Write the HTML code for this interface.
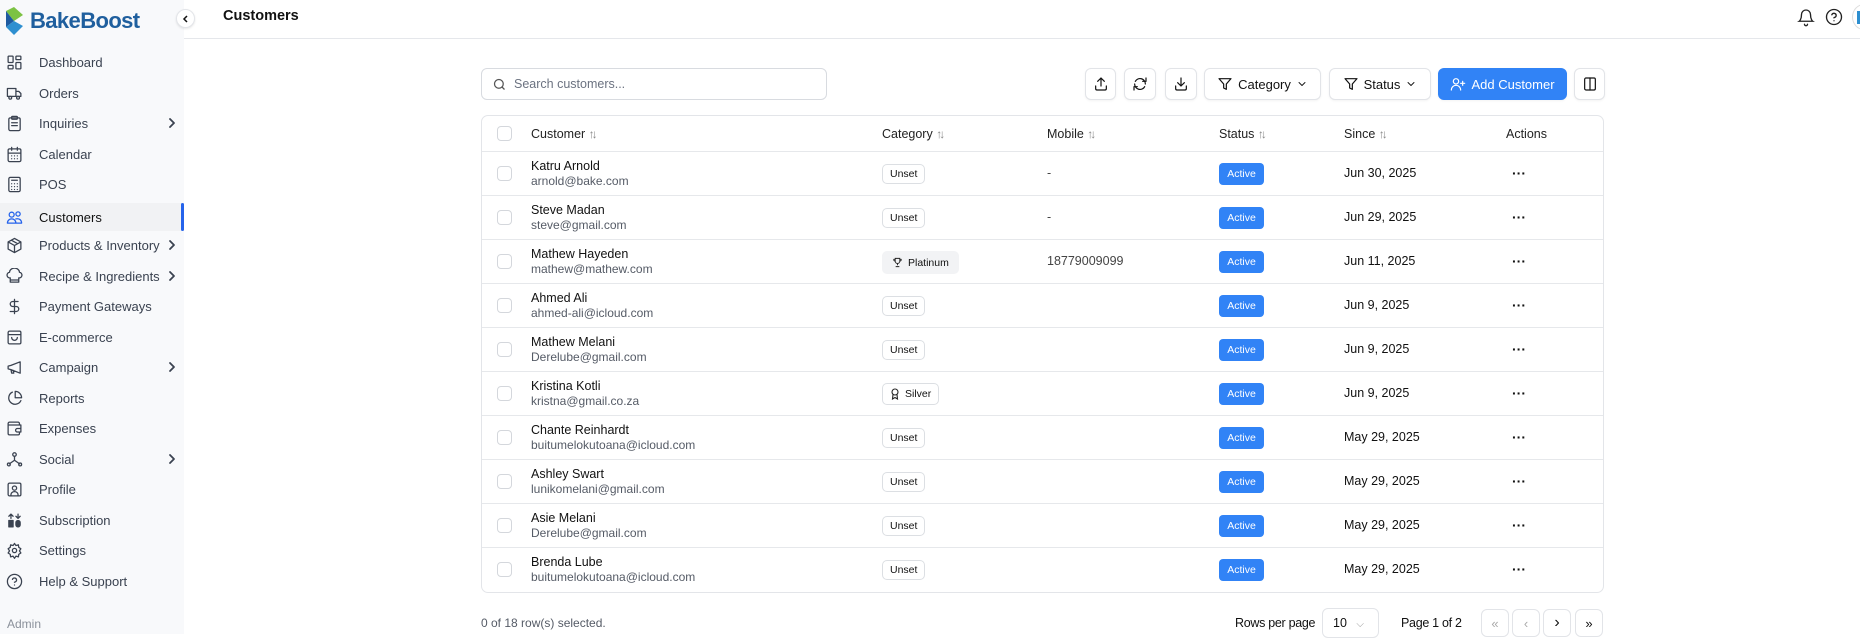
<!DOCTYPE html>
<html><head><meta charset="utf-8"><style>
*{box-sizing:border-box;margin:0;padding:0}
body{width:1860px;height:634px;overflow:hidden;font-family:"Liberation Sans",sans-serif;background:#fff;color:#111;position:relative}
.sb{position:absolute;left:0;top:0;width:184px;height:634px;background:#f8f9fb}
.nav{position:absolute;left:0;width:184px;height:30px;display:flex;align-items:center;font-size:13px;color:#3a4250}
.nav svg{position:absolute;left:6px;width:17px;height:17px;fill:none;stroke:#3a4250;stroke-width:1.8;stroke-linecap:round;stroke-linejoin:round}
.nav span{position:absolute;left:39px}
.nav .chev{position:absolute;left:166px;width:12px;height:12px}
.nav.act{background:#f1f2f4;color:#111;height:28px}
.nav.act:after{content:"";position:absolute;right:0;top:0;width:3px;height:28px;background:#2563eb;border-radius:2px}
.btn{position:absolute;top:68px;height:32px;border:1px solid #e2e4e8;border-radius:6px;background:#fff;display:flex;align-items:center;justify-content:center;font-size:13px;gap:5px;box-shadow:0 1px 2px rgba(0,0,0,.05)}
.btn svg{width:16px;height:16px;fill:none;stroke:#111;stroke-width:1.8;stroke-linecap:round;stroke-linejoin:round}
.tbl{position:absolute;left:481px;top:115px;width:1123px;height:478px;border:1px solid #e3e5e9;border-radius:7px;overflow:hidden}
.row{position:absolute;left:0;width:1121px;height:44px;border-bottom:1px solid #e6e8eb;font-size:13px}
.row>*{position:absolute}
.cb{left:15px;width:15px;height:15px;border:1px solid #d4d7dc;border-radius:4px;top:14px}
.nm{left:49px;top:7px;font-size:12.5px;color:#111;line-height:15px}
.em{left:49px;top:22px;font-size:12px;color:#555b66;line-height:15px}
.bd{left:400px;top:12px;height:20px;border:1px solid #dcdfe3;border-radius:5px;font-size:10.5px;padding:0 7px;display:flex;align-items:center;gap:5px}
.mob{left:565px;top:14px;color:#444;font-size:12.5px}
.st{left:737px;top:11px;width:45px;height:22px;background:#3183f6;border-radius:4px;color:#fff;font-size:10.5px;display:flex;align-items:center;justify-content:center}
.dt{left:862px;top:14px;font-size:12.5px}
.dots{left:1030px;top:13px;font-size:14px;font-weight:bold}
.hd{top:0;height:36px;font-size:12.5px;color:#222}
.hd>div{position:absolute;top:11px}
.ar{color:#888;font-size:12px;letter-spacing:-3px}
.pg{position:absolute;top:609px;width:28px;height:28px;border:1px solid #e2e4e8;border-radius:6px;display:flex;align-items:center;justify-content:center;font-size:13px}
</style></head><body>
<div class="sb">
 <svg style="position:absolute;left:5px;top:7px" width="20" height="28" viewBox="0 0 20 28"><path d="M1 4 L9 0 L18 8 L9 14Z" fill="#7cc243"/><path d="M1 4 L9 14 L1 20Z" fill="#1e5aa0"/><path d="M9 14 L18 19 L9 28 L1 20Z" fill="#2e8fd0"/></svg>
 <div style="position:absolute;left:30px;top:8px;font-size:22px;font-weight:bold;color:#1f5f9e;letter-spacing:-0.6px">BakeBoost</div>
</div>
<div style="position:absolute;left:176px;top:9px;width:19px;height:19px;border-radius:50%;background:#fff;border:1px solid #e3e5e9;box-shadow:0 1px 2px rgba(0,0,0,.1);display:flex;align-items:center;justify-content:center"><svg width="10" height="10" viewBox="0 0 10 10"><path d="M6 2 L3 5 L6 8" stroke="#111" stroke-width="1.5" fill="none"/></svg></div>

<div class="nav" style="top:47px"><svg viewBox="0 0 24 24"><rect x="3" y="3" width="7" height="9" rx="1"/><rect x="14" y="3" width="7" height="5" rx="1"/><rect x="14" y="12" width="7" height="9" rx="1"/><rect x="3" y="16" width="7" height="5" rx="1"/></svg><span>Dashboard</span></div>
<div class="nav" style="top:78px"><svg viewBox="0 0 24 24"><path d="M2 5h12v11H2z M14 9h4l3 3v4h-7"/><circle cx="6" cy="18" r="2"/><circle cx="17" cy="18" r="2"/></svg><span>Orders</span></div>
<div class="nav" style="top:108px"><svg viewBox="0 0 24 24"><rect x="4" y="4" width="16" height="18" rx="2"/><rect x="8" y="2" width="8" height="4" rx="1"/><path d="M8 11h8M8 15h8"/></svg><span>Inquiries</span><svg class="chev" viewBox="0 0 12 12"><path d="M4 2l4 4-4 4"/></svg></div>
<div class="nav" style="top:139px"><svg viewBox="0 0 24 24"><rect x="3" y="4" width="18" height="18" rx="2"/><path d="M3 10h18M8 2v4M16 2v4M8 14h.01M12 14h.01M16 14h.01M8 18h.01M12 18h.01M16 18h.01"/></svg><span>Calendar</span></div>
<div class="nav" style="top:169px"><svg viewBox="0 0 24 24"><rect x="4" y="2" width="16" height="20" rx="2"/><path d="M8 6h8M8 11h.01M12 11h.01M16 11h.01M8 15h.01M12 15h.01M16 15h.01M8 19h.01M12 19h.01M16 19h.01"/></svg><span>POS</span></div>
<div class="nav act" style="top:203px"><svg viewBox="0 0 24 24" style="stroke:#2563eb"><circle cx="8" cy="8" r="3.5"/><circle cx="17" cy="7" r="3"/><path d="M2 20c0-4 3-6 6-6s6 2 6 6z M14 14c4-1 8 1 8 6h-7"/></svg><span>Customers</span></div>
<div class="nav" style="top:230px"><svg viewBox="0 0 24 24"><path d="M12 2l9 5v10l-9 5-9-5V7z M3 7l9 5 9-5 M12 12v10 M7.5 4.5l9 5"/></svg><span>Products &amp; Inventory</span><svg class="chev" viewBox="0 0 12 12"><path d="M4 2l4 4-4 4"/></svg></div>
<div class="nav" style="top:261px"><svg viewBox="0 0 24 24"><path d="M6 14a4 4 0 0 1-1-8 6 5 0 0 1 14 0 4 4 0 0 1-1 8v6H6z M6 17h12"/></svg><span>Recipe &amp; Ingredients</span><svg class="chev" viewBox="0 0 12 12"><path d="M4 2l4 4-4 4"/></svg></div>
<div class="nav" style="top:291px"><svg viewBox="0 0 24 24"><path d="M12 2v20M17 5H9.5a3.5 3.5 0 0 0 0 7h5a3.5 3.5 0 0 1 0 7H6"/></svg><span>Payment Gateways</span></div>
<div class="nav" style="top:322px"><svg viewBox="0 0 24 24"><rect x="3" y="3" width="18" height="18" rx="2"/><path d="M3 8h18M8 12a4 4 0 0 0 8 0"/></svg><span>E-commerce</span></div>
<div class="nav" style="top:352px"><svg viewBox="0 0 24 24"><path d="M3 10v4l4 1 13 5V4L7 9zM7 15l1 5h3l-1-4"/></svg><span>Campaign</span><svg class="chev" viewBox="0 0 12 12"><path d="M4 2l4 4-4 4"/></svg></div>
<div class="nav" style="top:383px"><svg viewBox="0 0 24 24"><path d="M21 15A9 9 0 1 1 9 3 M13 2a9 9 0 0 1 9 9h-9z"/></svg><span>Reports</span></div>
<div class="nav" style="top:413px"><svg viewBox="0 0 24 24"><path d="M19 7V5a2 2 0 0 0-2-2H5a2 2 0 0 0-2 2v14a2 2 0 0 0 2 2h12a2 2 0 0 0 2-2v-2 M3 7h18v10h-5a2.5 2.5 0 0 1 0-5h5"/></svg><span>Expenses</span></div>
<div class="nav" style="top:444px"><svg viewBox="0 0 24 24"><circle cx="12" cy="5" r="2.5"/><circle cx="4" cy="19" r="2"/><circle cx="20" cy="19" r="2"/><path d="M12 8v5l-7 5M12 13l7 5"/></svg><span>Social</span><svg class="chev" viewBox="0 0 12 12"><path d="M4 2l4 4-4 4"/></svg></div>
<div class="nav" style="top:474px"><svg viewBox="0 0 24 24"><rect x="3" y="3" width="18" height="18" rx="2"/><circle cx="12" cy="10" r="3"/><path d="M7 21v-2a5 4 0 0 1 10 0v2"/></svg><span>Profile</span></div>
<div class="nav" style="top:505px"><svg viewBox="0 0 24 24"><path d="M7 3v6M4 6l3-3 3 3M17 3v6M14 6l3 3 3-3"/><rect x="4" y="12" width="6" height="9" fill="#3a4250"/><rect x="14" y="12" width="6" height="9" rx="3" fill="#3a4250"/></svg><span>Subscription</span></div>
<div class="nav" style="top:535px"><svg viewBox="0 0 24 24"><circle cx="12" cy="12" r="3"/><path d="M12 2l2 3 3.5-1 .5 3.5 3 2-2 3 2 3-3 2-.5 3.5-3.5-1-2 3-2-3-3.5 1-.5-3.5-3-2 2-3-2-3 3-2 .5-3.5 3.5 1z"/></svg><span>Settings</span></div>
<div class="nav" style="top:566px"><svg viewBox="0 0 24 24"><circle cx="12" cy="12" r="10"/><path d="M9.1 9a3 3 0 0 1 5.8 1c0 2-3 3-3 3M12 17h.01"/></svg><span>Help &amp; Support</span></div>
<div style="position:absolute;left:7px;top:617px;font-size:12px;color:#8a909a">Admin</div>

<div style="position:absolute;left:184px;top:38px;width:1676px;height:1px;background:#e5e7eb"></div>
<div style="position:absolute;left:223px;top:8px;font-size:14.5px;font-weight:bold">Customers</div>
<svg style="position:absolute;left:1797px;top:8px" width="18" height="19" viewBox="0 0 24 24" fill="none" stroke="#222" stroke-width="1.8" stroke-linecap="round"><path d="M6 8a6 6 0 0 1 12 0c0 7 3 9 3 9H3s3-2 3-9M10 21a2 2 0 0 0 4 0"/></svg>
<svg style="position:absolute;left:1825px;top:8px" width="18" height="18" viewBox="0 0 24 24" fill="none" stroke="#222" stroke-width="1.8" stroke-linecap="round"><circle cx="12" cy="12" r="10"/><path d="M9.1 9a3 3 0 0 1 5.8 1c0 2-3 3-3 3M12 17h.01"/></svg>
<div style="position:absolute;left:1852px;top:4px;width:24px;height:26px;border-radius:50%;border:1px solid #ddd;background:#fff;overflow:hidden"><div style="position:absolute;left:4px;top:6px;width:6px;height:13px;background:#2e8fd0"></div></div>

<div style="position:absolute;left:481px;top:68px;width:346px;height:32px;border:1px solid #d8dbe0;border-radius:6px;display:flex;align-items:center;font-size:12.5px;color:#6b7280"><svg style="margin:0 7px 0 10px" width="15" height="15" viewBox="0 0 24 24" fill="none" stroke="#555" stroke-width="2"><circle cx="11" cy="11" r="7"/><path d="M20 20l-4-4"/></svg>Search customers...</div>
<div class="btn" style="left:1085px;width:31px"><svg viewBox="0 0 24 24"><path d="M12 3v12M7 8l5-5 5 5M4 15v4a2 2 0 0 0 2 2h12a2 2 0 0 0 2-2v-4"/></svg></div>
<div class="btn" style="left:1124px;width:32px"><svg viewBox="0 0 24 24"><path d="M21 3v5h-5M3 21v-5h5M20 12a8 8 0 0 0-15-4M4 12a8 8 0 0 0 15 4"/></svg></div>
<div class="btn" style="left:1165px;width:32px"><svg viewBox="0 0 24 24"><path d="M12 3v12M7 10l5 5 5-5M4 15v4a2 2 0 0 0 2 2h12a2 2 0 0 0 2-2v-4"/></svg></div>
<div class="btn" style="left:1204px;width:117px"><svg viewBox="0 0 24 24"><path d="M3 4h18l-7 8v8l-4-2v-6z"/></svg>Category<svg viewBox="0 0 24 24" style="width:12px"><path d="M6 9l6 6 6-6"/></svg></div>
<div class="btn" style="left:1329px;width:102px"><svg viewBox="0 0 24 24"><path d="M3 4h18l-7 8v8l-4-2v-6z"/></svg>Status<svg viewBox="0 0 24 24" style="width:12px"><path d="M6 9l6 6 6-6"/></svg></div>
<div class="btn" style="left:1438px;width:129px;background:#3183f6;border-color:#3183f6;color:#fff"><svg viewBox="0 0 24 24" style="stroke:#fff"><circle cx="9" cy="8" r="4"/><path d="M2 21a7 7 0 0 1 14 0M19 8v6M16 11h6"/></svg>Add Customer</div>
<div class="btn" style="left:1574px;width:31px"><svg viewBox="0 0 24 24"><rect x="4" y="3" width="16" height="18" rx="2"/><path d="M12 3v18"/></svg></div>

<div class="tbl">
 <div class="row hd"><div class="cb" style="top:10px"></div>
  <div style="left:49px">Customer <span class="ar">↑↓</span></div>
  <div style="left:400px">Category <span class="ar">↑↓</span></div>
  <div style="left:565px">Mobile <span class="ar">↑↓</span></div>
  <div style="left:737px">Status <span class="ar">↑↓</span></div>
  <div style="left:862px">Since <span class="ar">↑↓</span></div>
  <div style="left:1024px">Actions</div></div>
 <div class="row" style="top:36px"><div class="cb"></div><div class="nm">Katru Arnold</div><div class="em">arnold@bake.com</div><div class="bd">Unset</div><div class="mob">-</div><div class="st">Active</div><div class="dt">Jun 30, 2025</div><div class="dots">···</div></div>
 <div class="row" style="top:80px"><div class="cb"></div><div class="nm">Steve Madan</div><div class="em">steve@gmail.com</div><div class="bd">Unset</div><div class="mob">-</div><div class="st">Active</div><div class="dt">Jun 29, 2025</div><div class="dots">···</div></div>
 <div class="row" style="top:124px"><div class="cb"></div><div class="nm">Mathew Hayeden</div><div class="em">mathew@mathew.com</div><div class="bd" style="background:#f2f3f5;border-color:#f2f3f5;height:23px;top:11px;padding:0 9px"><svg width="11" height="11" viewBox="0 0 24 24" fill="none" stroke="#222" stroke-width="2"><path d="M7 3h10v6a5 5 0 0 1-10 0z M12 14v4 M8 21h8 M7 5H4a3 3 0 0 0 3 4 M17 5h3a3 3 0 0 1-3 4"/></svg>Platinum</div><div class="mob">18779009099</div><div class="st">Active</div><div class="dt">Jun 11, 2025</div><div class="dots">···</div></div>
 <div class="row" style="top:168px"><div class="cb"></div><div class="nm">Ahmed Ali</div><div class="em">ahmed-ali@icloud.com</div><div class="bd">Unset</div><div class="st">Active</div><div class="dt">Jun 9, 2025</div><div class="dots">···</div></div>
 <div class="row" style="top:212px"><div class="cb"></div><div class="nm">Mathew Melani</div><div class="em">Derelube@gmail.com</div><div class="bd">Unset</div><div class="st">Active</div><div class="dt">Jun 9, 2025</div><div class="dots">···</div></div>
 <div class="row" style="top:256px"><div class="cb"></div><div class="nm">Kristina Kotli</div><div class="em">kristna@gmail.co.za</div><div class="bd" style="height:22px;top:11px"><svg width="10" height="12" viewBox="0 0 20 24" fill="none" stroke="#222" stroke-width="2.2"><circle cx="10" cy="8" r="6"/><path d="M6 13l-1 9 5-3 5 3-1-9"/></svg>Silver</div><div class="st">Active</div><div class="dt">Jun 9, 2025</div><div class="dots">···</div></div>
 <div class="row" style="top:300px"><div class="cb"></div><div class="nm">Chante Reinhardt</div><div class="em">buitumelokutoana@icloud.com</div><div class="bd">Unset</div><div class="st">Active</div><div class="dt">May 29, 2025</div><div class="dots">···</div></div>
 <div class="row" style="top:344px"><div class="cb"></div><div class="nm">Ashley Swart</div><div class="em">lunikomelani@gmail.com</div><div class="bd">Unset</div><div class="st">Active</div><div class="dt">May 29, 2025</div><div class="dots">···</div></div>
 <div class="row" style="top:388px"><div class="cb"></div><div class="nm">Asie Melani</div><div class="em">Derelube@gmail.com</div><div class="bd">Unset</div><div class="st">Active</div><div class="dt">May 29, 2025</div><div class="dots">···</div></div>
 <div class="row" style="top:432px;border-bottom:none"><div class="cb"></div><div class="nm">Brenda Lube</div><div class="em">buitumelokutoana@icloud.com</div><div class="bd">Unset</div><div class="st">Active</div><div class="dt">May 29, 2025</div><div class="dots">···</div></div>
</div>

<div style="position:absolute;left:481px;top:616px;font-size:12px;color:#555b66">0 of 18 row(s) selected.</div>
<div style="position:absolute;left:1235px;top:616px;font-size:12.5px;letter-spacing:-0.3px">Rows per page</div>
<div style="position:absolute;left:1322px;top:608px;width:57px;height:30px;border:1px solid #e2e4e8;border-radius:6px;font-size:12.5px;padding:7px 0 0 10px">10 <span style="color:#999;font-size:10px;margin-left:6px">⌵</span></div>
<div style="position:absolute;left:1401px;top:616px;font-size:12.5px;letter-spacing:-0.3px">Page 1 of 2</div>
<div class="pg" style="left:1481px;color:#aaa">«</div>
<div class="pg" style="left:1512px;color:#aaa">‹</div>
<div class="pg" style="left:1543px;font-size:16px">›</div>
<div class="pg" style="left:1575px">»</div>
</body></html>
